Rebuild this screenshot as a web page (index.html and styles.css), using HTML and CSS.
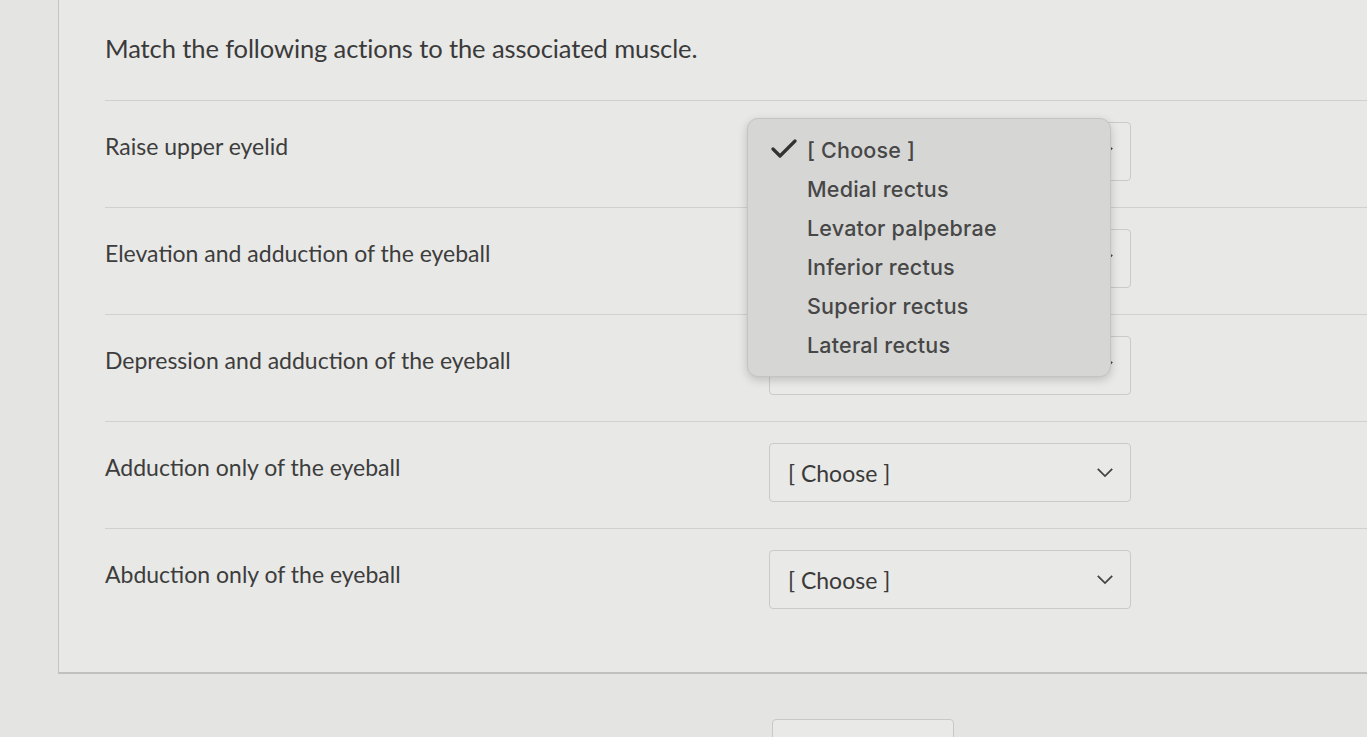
FILE: index.html
```html
<!DOCTYPE html>
<html lang="en">
<head>
<meta charset="utf-8">
<title>Matching question</title>
<link rel="stylesheet" href="styles.css">
</head>
<body>
<div class="page">
  <div class="card">
    <h1 class="title">Match the following actions to the associated muscle.</h1>
    <div class="rows">
      <div class="row">
        <div class="label">Raise upper eyelid</div>
        <div class="select-wrap">
          <div class="select covered"><span class="val">[ Choose ]</span><svg class="chev" viewBox="0 0 20 12" width="18" height="11"><path d="M2 2 L10 10 L18 2" fill="none" stroke="#444" stroke-width="2"/></svg></div>
          <div class="popup">
            <div class="opt selected"><svg class="check" viewBox="0 0 26 20" width="26" height="20"><path d="M2 10 L9 17 L24 2" fill="none" stroke="#333" stroke-width="3.2" stroke-linecap="round" stroke-linejoin="round"/></svg><span>[ Choose ]</span></div>
            <div class="opt"><span>Medial rectus</span></div>
            <div class="opt"><span>Levator palpebrae</span></div>
            <div class="opt"><span>Inferior rectus</span></div>
            <div class="opt"><span>Superior rectus</span></div>
            <div class="opt"><span>Lateral rectus</span></div>
          </div>
        </div>
      </div>
      <div class="row">
        <div class="label">Elevation and adduction of the eyeball</div>
        <div class="select-wrap">
          <div class="select covered"><span class="val">[ Choose ]</span><svg class="chev" viewBox="0 0 20 12" width="18" height="11"><path d="M2 2 L10 10 L18 2" fill="none" stroke="#444" stroke-width="2"/></svg></div>
        </div>
      </div>
      <div class="row">
        <div class="label">Depression and adduction of the eyeball</div>
        <div class="select-wrap">
          <div class="select covered"><span class="val">[ Choose ]</span><svg class="chev" viewBox="0 0 20 12" width="18" height="11"><path d="M2 2 L10 10 L18 2" fill="none" stroke="#444" stroke-width="2"/></svg></div>
        </div>
      </div>
      <div class="row">
        <div class="label">Adduction only of the eyeball</div>
        <div class="select-wrap">
          <div class="select"><span class="val">[ Choose ]</span><svg class="chev" viewBox="0 0 20 12" width="18" height="11"><path d="M2 2 L10 10 L18 2" fill="none" stroke="#444" stroke-width="2"/></svg></div>
        </div>
      </div>
      <div class="row">
        <div class="label">Abduction only of the eyeball</div>
        <div class="select-wrap">
          <div class="select"><span class="val">[ Choose ]</span><svg class="chev" viewBox="0 0 20 12" width="18" height="11"><path d="M2 2 L10 10 L18 2" fill="none" stroke="#444" stroke-width="2"/></svg></div>
        </div>
      </div>
    </div>
  </div>
  <div class="footer">
    <div class="btn"></div>
  </div>
</div>
</body>
</html>
```

FILE: styles.css
```css
html, body {
  margin: 0;
  padding: 0;
}
body {
  background: #e4e4e2;
  font-family: "Lato", "Liberation Sans", sans-serif;
  color: #3c3c3c;
  width: 1367px;
  height: 737px;
  overflow: hidden;
}
.page {
  padding-left: 58px;
}
.card {
  border-left: 1px solid #c4c4c2;
  border-bottom: 2px solid #c0c0be;
  background: #e8e8e6;
  padding: 33px 0 37px 46px;
}
.title {
  margin: 0 0 37px 0;
  font-size: 25.5px;
  font-weight: 400;
  line-height: 30px;
  color: #3a3a3a;
  letter-spacing: -0.1px;
}
.rows {
  display: flex;
  flex-direction: column;
}
.row {
  display: flex;
  border-top: 1px solid #d0d0ce;
  padding: 21px 0 26px 0;
  height: 59px;
}
.label {
  width: 664px;
  padding-top: 10px;
  font-size: 23px;
  line-height: 28px;
  color: #3d3d3d;
}
.select-wrap {
  position: relative;
  width: 362px;
}
.select {
  box-sizing: border-box;
  height: 59px;
  border: 1px solid #cacac8;
  border-radius: 4px;
  background: #e9e9e7;
  display: flex;
  align-items: center;
  justify-content: space-between;
  padding: 0 16px 0 18px;
  font-size: 23px;
  color: #3a3a3a;
}
.covered .val {
  visibility: hidden;
}
.chev {
  display: block;
}
.popup {
  position: absolute;
  left: -22px;
  top: -4px;
  width: 364px;
  box-sizing: border-box;
  padding: 11px 0 12px 0;
  background: #d6d6d5;
  border: 1px solid #c4c4c3;
  border-radius: 11px;
  box-shadow: 0 3px 10px rgba(0,0,0,0.18);
  font-family: "Inter", "Open Sans", sans-serif;
  z-index: 2;
}
.opt {
  display: flex;
  align-items: center;
  height: 39px;
  padding-left: 59px;
  position: relative;
  font-size: 21.5px;
  font-weight: 500;
  color: #474747;
  letter-spacing: 0.2px;
}
.check {
  position: absolute;
  left: 23px;
  top: 9px;
}
.footer {
  padding: 45px 0 0 714px;
}
.btn {
  width: 180px;
  height: 40px;
  border: 1px solid #c8c8c6;
  border-radius: 4px;
  background: #e9e9e7;
}
```
